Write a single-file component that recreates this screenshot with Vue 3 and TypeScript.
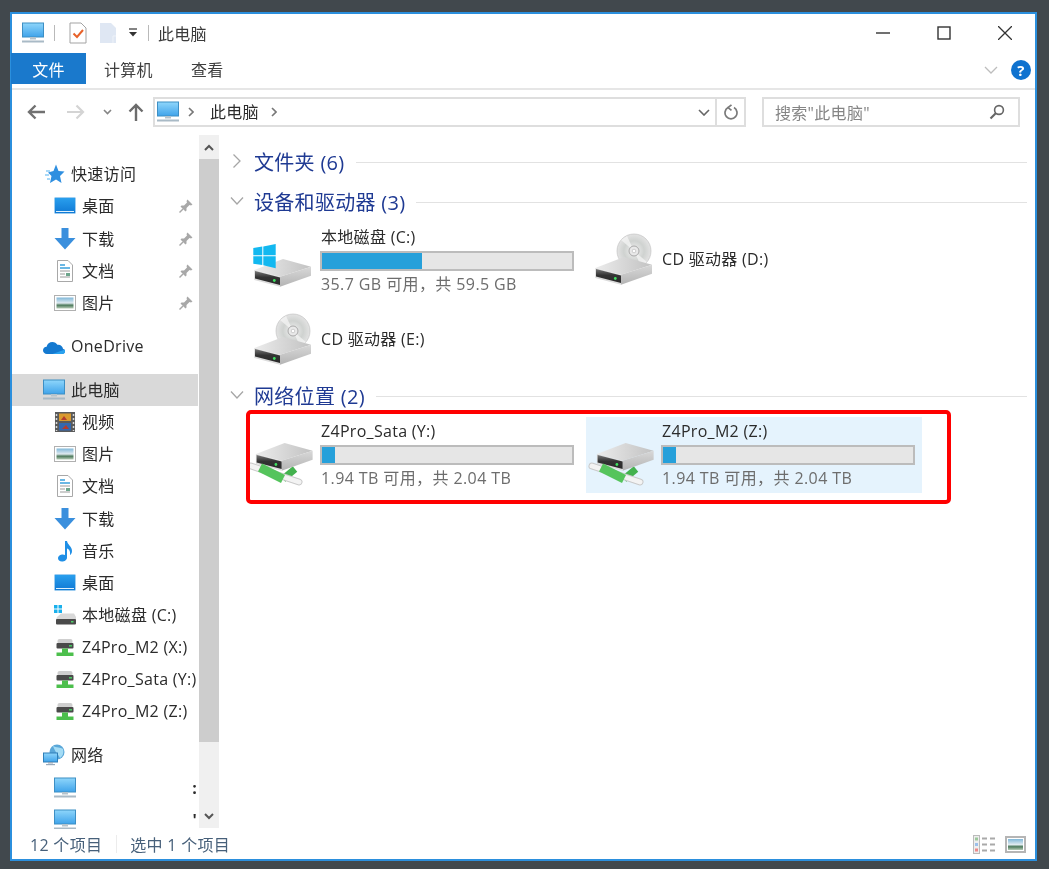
<script setup lang="ts">
// Explorer window, "This PC" view
interface NavRow {
  icon: string;
  label: string;
  child?: boolean;
  pin?: boolean;
  gap?: number;
  selected?: boolean;
  tail?: string;
}

interface Tile {
  name: string;
  icon: string;
  info?: string;
  percent?: number;
  selected?: boolean;
}

const navRows: NavRow[] = [
  { icon: 'star', label: '快速访问' },
  { icon: 'desktop', label: '桌面', child: true, pin: true },
  { icon: 'download', label: '下载', child: true, pin: true },
  { icon: 'doc', label: '文档', child: true, pin: true },
  { icon: 'pic', label: '图片', child: true, pin: true },
  { icon: 'cloud', label: 'OneDrive', gap: 12 },
  { icon: 'monitor', label: '此电脑', gap: 10, selected: true },
  { icon: 'video', label: '视频', child: true },
  { icon: 'pic', label: '图片', child: true },
  { icon: 'doc', label: '文档', child: true },
  { icon: 'download', label: '下载', child: true },
  { icon: 'music', label: '音乐', child: true },
  { icon: 'desktop', label: '桌面', child: true },
  { icon: 'cdrive', label: '本地磁盘 (C:)', child: true },
  { icon: 'netsmall', label: 'Z4Pro_M2 (X:)', child: true },
  { icon: 'netsmall', label: 'Z4Pro_Sata (Y:)', child: true },
  { icon: 'netsmall', label: 'Z4Pro_M2 (Z:)', child: true },
  { icon: 'network', label: '网络', gap: 11 },
  { icon: 'monitor', label: '', child: true, tail: ':' },
  { icon: 'monitor', label: '', child: true, tail: '\'' }
];

const deviceTiles: Tile[] = [
  { name: '本地磁盘 (C:)', icon: 'hddwin', info: '35.7 GB 可用，共 59.5 GB', percent: 40 },
  { name: 'CD 驱动器 (D:)', icon: 'hddcd' },
  { name: 'CD 驱动器 (E:)', icon: 'hddcd' }
];

const networkTiles: Tile[] = [
  { name: 'Z4Pro_Sata (Y:)', icon: 'hddnet', info: '1.94 TB 可用，共 2.04 TB', percent: 5 },
  { name: 'Z4Pro_M2 (Z:)', icon: 'hddnet', info: '1.94 TB 可用，共 2.04 TB', percent: 5, selected: true }
];
</script>

<template>
  <div class="desktop">
    <svg class="defs" width="0" height="0">
      <defs>
        <linearGradient id="screen" x1="0" y1="0" x2="0" y2="1">
          <stop offset="0" stop-color="#8fd6fb" />
          <stop offset="1" stop-color="#3fa3ea" />
        </linearGradient>
        <linearGradient id="deskfill" x1="0" y1="0" x2="0" y2="1">
          <stop offset="0" stop-color="#2aa0ee" />
          <stop offset="1" stop-color="#0f78d4" />
        </linearGradient>
        <linearGradient id="hddtop" x1="0" y1="0" x2="1" y2="0">
          <stop offset="0" stop-color="#ececec" />
          <stop offset="1" stop-color="#c2c2c2" />
        </linearGradient>
        <linearGradient id="hddside" x1="0" y1="0" x2="0" y2="1">
          <stop offset="0" stop-color="#d8d8d8" />
          <stop offset="1" stop-color="#b4b4b4" />
        </linearGradient>
        <linearGradient id="slot" x1="0" y1="0" x2="0" y2="1">
          <stop offset="0" stop-color="#777" />
          <stop offset=".45" stop-color="#333" />
          <stop offset="1" stop-color="#2a2a2a" />
        </linearGradient>
        <linearGradient id="landscape" x1="0" y1="0" x2="0" y2="1">
          <stop offset="0" stop-color="#7fb7d8" />
          <stop offset=".5" stop-color="#dfeaf0" />
          <stop offset=".7" stop-color="#4d7a5c" />
          <stop offset="1" stop-color="#b9cdb9" />
        </linearGradient>
        <radialGradient id="discfill" cx=".5" cy=".5" r=".5">
          <stop offset="0" stop-color="#f2f2f2" />
          <stop offset=".6" stop-color="#cfd2d0" />
          <stop offset="1" stop-color="#e3e3e3" />
        </radialGradient>

        <symbol id="monitor" viewBox="0 0 22 22">
          <rect x="0.5" y="1" width="21" height="14" fill="url(#screen)" stroke="#3d8fc4" />
          <rect x="8" y="15" width="6" height="2.5" fill="#b5c3cc" />
          <rect x="0" y="18.5" width="22" height="2" fill="#a9bac6" />
        </symbol>
        <symbol id="desktop" viewBox="0 0 22 22">
          <rect x="0.5" y="2.5" width="21" height="16" rx="1" fill="url(#deskfill)" stroke="#9ecdf0" />
          <rect x="2" y="16" width="18" height="1" fill="#dff1fd" />
        </symbol>
        <symbol id="download" viewBox="0 0 22 22">
          <path d="M7.5 0H14.5V10H21.5L11 21.5L0.5 10H7.5Z" fill="#3a8fdd" />
        </symbol>
        <symbol id="doc" viewBox="0 0 22 22">
          <path d="M3.5 0.5H14L18.5 5V21.5H3.5Z" fill="#fff" stroke="#a8a8a8" />
          <path d="M6 5H11M6 8H16" stroke="#3aa0dc" stroke-width="1.5" />
          <path d="M6 11H16M6 14H11M6 17H16" stroke="#9a9a9a" />
          <rect x="12" y="13" width="4" height="3" fill="#6da58c" />
        </symbol>
        <symbol id="pic" viewBox="0 0 22 22">
          <rect x="0.5" y="3.5" width="21" height="15" fill="#fff" stroke="#b0b0b0" />
          <rect x="2.5" y="5.5" width="17" height="11" fill="url(#landscape)" />
        </symbol>
        <symbol id="video" viewBox="0 0 22 22">
          <rect x="1" y="1" width="20" height="20" fill="#5a5a5a" />
          <rect x="5" y="2.5" width="12" height="7.5" fill="#d99a2e" />
          <rect x="5" y="12" width="12" height="7.5" fill="#3468b0" />
          <path d="M7 9L10 5L13 9ZM8 18L12 14L15 18Z" fill="#b33a2e" />
          <path d="M2.5 3V20M19.5 3V20" stroke="#d8d8d8" stroke-width="1.5" stroke-dasharray="2 2" />
        </symbol>
        <symbol id="music" viewBox="0 0 22 22">
          <path d="M11 1H13C13.5 5 18 6 18 11C18 13 17 14.5 16 15C16.5 11 15 9 13 8.5V17.5C13 20 10.5 21.5 8 21.5C5.5 21.5 4 20 4 18.2C4 16 6.5 14.5 8.8 14.5C9.6 14.5 10.4 14.7 11 15Z" fill="#1f8fe6" />
        </symbol>
        <symbol id="cdrive" viewBox="0 0 22 22">
          <path d="M0 1H3.5V4.5H0ZM4.5 1H8V4.5H4.5ZM0 5.5H3.5V9H0ZM4.5 5.5H8V9H4.5Z" fill="#19b0ec" />
          <path d="M3 13L7 9.5H20L22 13V16H2Z" fill="#d8d8d8" />
          <rect x="2" y="15" width="20" height="5.5" rx="1" fill="#4a4a4a" />
          <rect x="17" y="17" width="2.5" height="1.5" fill="#4fd06a" />
        </symbol>
        <symbol id="netsmall" viewBox="0 0 22 22">
          <rect x="3.5" y="2" width="15" height="5" rx="2" fill="#cfcfcf" />
          <rect x="2.5" y="6" width="17" height="5.5" rx="1" fill="#4a4a4a" />
          <rect x="15" y="8" width="3" height="1.6" fill="#48c860" />
          <rect x="8" y="11.5" width="6" height="4.5" fill="#4cbf4c" />
          <rect x="2.5" y="15.5" width="17" height="3.5" fill="#4cbf4c" />
        </symbol>
        <symbol id="star" viewBox="0 0 22 22">
          <path d="M13 1.5L15.5 8L21.5 8.5L17 13L18.5 20L13 16.5L7 20L8.5 13L5 9.5L10.5 8Z" fill="#2f8fe0" />
          <path d="M3 8H7M2 12H6M4 16H7" stroke="#8ccbf5" stroke-width="1.3" />
        </symbol>
        <symbol id="cloud" viewBox="0 0 22 22">
          <path d="M4 18C1.5 18 0 16.2 0 14.3C0 12.3 1.5 10.8 3.6 10.7C4.2 7.9 6.6 6 9.4 6C11.6 6 13.4 7.1 14.4 8.8C17.2 8.3 19.7 10.1 20 12.8C21.2 13.2 22 14.3 22 15.5C22 17 20.8 18 19.3 18Z" fill="#1479d0" />
          <path d="M9.5 18L22 13.4C22 14.3 22 14.8 22 15.5C22 17 20.8 18 19.3 18Z" fill="#2aa2ef" />
        </symbol>
        <symbol id="network" viewBox="0 0 22 22">
          <circle cx="14" cy="8" r="7.5" fill="#5aa7d8" />
          <path d="M10 2C13 4 18 3 20 5C21 9 20 12 17 14C15 10 12 8 10 2Z" fill="#a4dcf5" />
          <rect x="0.5" y="9" width="14" height="9" fill="url(#screen)" stroke="#2f7fb8" />
          <rect x="5" y="18" width="5" height="1.5" fill="#9ab" />
          <rect x="3" y="20" width="9" height="1.2" fill="#9ab" />
        </symbol>

        <g id="hdd-body">
          <path d="M1.3 31L30 20L58 27.7L27 37.7Z" fill="url(#hddtop)" />
          <path d="M27 37.7L58 27.7V36.7L27 47.7Z" fill="url(#hddside)" />
          <path d="M1.3 31L27 37.7V47.7L1.3 41Z" fill="#dcdcdc" />
          <path d="M2 32L27 38.6V46L2 39.5Z" fill="url(#slot)" />
          <circle cx="21.3" cy="41.5" r="1.4" fill="#3fe060" />
        </g>
        <symbol id="hddwin" viewBox="0 0 60 60" overflow="visible">
          <use href="#hdd-body" />
          <path d="M0.3 9L9.3 7.6V16.2H0.3ZM10.3 7.4L22.7 5V16.2H10.3ZM0.3 17.2H9.3V26L0.3 24.8ZM10.3 17.2H22.7V29.3L10.3 26.2Z" fill="#12b8f0" />
        </symbol>
        <symbol id="hddcd" viewBox="0 0 60 60" overflow="visible">
          <circle cx="40" cy="14" r="17" fill="url(#discfill)" stroke="#bcbcbc" stroke-width=".6" />
          <path d="M40 14L27 3L33 -1ZM40 14L53 25L47 29Z" fill="#f7f7f7" opacity=".7" />
          <circle cx="40" cy="14" r="5" fill="#e9e9e9" stroke="#a9a9a9" />
          <circle cx="40" cy="14" r="1.8" fill="#fff" stroke="#a9a9a9" stroke-width=".5" />
          <use href="#hdd-body" />
        </symbol>
        <symbol id="hddnet" viewBox="0 0 60 60" overflow="visible">
          <path d="M30 46L42 36" stroke="#43b24e" stroke-width="7" />
          <use href="#hdd-body" transform="translate(1.6 -10)" />
          <path d="M-2 33L46 49" stroke="#c9c9c9" stroke-width="7" stroke-linecap="round" />
          <path d="M-2 33L46 49" stroke="#f3f3f3" stroke-width="5" stroke-linecap="round" />
          <path d="M7 34.5L30 46" stroke="#55c45c" stroke-width="9" />
        </symbol>
      </defs>
    </svg>

    <div class="window">
      <!-- Title bar -->
      <header class="titlebar">
        <svg class="ico22"><use href="#monitor" /></svg>
        <i class="qsep first"></i>
        <svg class="qa" width="18" height="22" viewBox="0 0 18 22">
          <path d="M1 1H12L17 6V21H1Z" fill="#fff" stroke="#a3a3a3" />
          <path d="M4.5 11.5L8 15L14 8" fill="none" stroke="#e8622a" stroke-width="2" />
        </svg>
        <svg class="qa dim" width="18" height="22" viewBox="0 0 18 22">
          <path d="M1 1H12L17 6V21H1Z" fill="#dfe7f3" />
          <path d="M14 21V14H17" fill="none" stroke="#eef2f8" />
        </svg>
        <svg class="qa drop" width="10" height="10" viewBox="0 0 10 10">
          <path d="M1 1H9" stroke="#333" stroke-width="1.2" />
          <path d="M1 4H9L5 8.5Z" fill="#333" />
        </svg>
        <i class="qsep"></i>
        <span class="title">此电脑</span>
        <div class="caption">
          <svg width="14" height="14" viewBox="0 0 14 14"><path d="M0 7H14" stroke="#333" stroke-width="1.4" /></svg>
          <svg width="14" height="14" viewBox="0 0 14 14"><rect x="1" y="1" width="12" height="12" fill="none" stroke="#333" stroke-width="1.4" /></svg>
          <svg width="14" height="14" viewBox="0 0 14 14"><path d="M0 0L14 14M14 0L0 14" stroke="#333" stroke-width="1.3" /></svg>
        </div>
      </header>

      <!-- Ribbon tabs -->
      <nav class="ribbon">
        <span class="tab file">文件</span>
        <span class="tab">计算机</span>
        <span class="tab">查看</span>
        <svg class="collapse" width="14" height="8" viewBox="0 0 14 8"><path d="M1 1L7 7L13 1" fill="none" stroke="#bdbdbd" stroke-width="1.3" /></svg>
        <span class="help">?</span>
      </nav>

      <!-- Address row -->
      <div class="addressrow">
        <div class="navbtn wide">
          <svg width="18" height="16" viewBox="0 0 18 16"><path d="M18 8H2M8.5 1.5L2 8L8.5 14.5" fill="none" stroke="#717171" stroke-width="2.4" /></svg>
        </div>
        <div class="navbtn wide">
          <svg width="18" height="16" viewBox="0 0 18 16"><path d="M0 8H16M9.5 1.5L16 8L9.5 14.5" fill="none" stroke="#d4d4d4" stroke-width="2.2" /></svg>
        </div>
        <div class="navbtn thin">
          <svg width="9" height="6" viewBox="0 0 9 6"><path d="M1 1L4.5 4.5L8 1" fill="none" stroke="#858585" stroke-width="1.6" /></svg>
        </div>
        <div class="navbtn up">
          <svg width="16" height="18" viewBox="0 0 16 18"><path d="M8 18V2M1.5 8.5L8 2L14.5 8.5" fill="none" stroke="#6c6c6c" stroke-width="2.4" /></svg>
        </div>
        <div class="addressbox">
          <svg class="ico22"><use href="#monitor" /></svg>
          <svg class="crumb first" width="6" height="10" viewBox="0 0 6 10"><path d="M1 1L5 5L1 9" fill="none" stroke="#777" stroke-width="1.6" /></svg>
          <span class="crumbtext">此电脑</span>
          <svg class="crumb" width="6" height="10" viewBox="0 0 6 10"><path d="M1 1L5 5L1 9" fill="none" stroke="#777" stroke-width="1.6" /></svg>
          <svg class="addrdrop" width="12" height="7" viewBox="0 0 12 7"><path d="M1 1L6 6L11 1" fill="none" stroke="#666" stroke-width="1.6" /></svg>
          <div class="refresh">
            <svg width="14" height="16" viewBox="0 0 14 16"><path d="M4 3.6A6 6 0 1 0 10 3.6M7.5 0.8L4 3.6L7.5 6.4" fill="none" stroke="#7a7a7a" stroke-width="1.7" /></svg>
          </div>
        </div>
        <div class="searchbox">
          <span>搜索"此电脑"</span>
          <svg width="16" height="16" viewBox="0 0 16 16"><circle cx="10" cy="6" r="4.4" fill="none" stroke="#666" stroke-width="1.6" /><path d="M7 9L1.5 14.5" stroke="#666" stroke-width="2.2" /></svg>
        </div>
      </div>

      <div class="body">
        <!-- Navigation pane -->
        <aside class="sidebar">
          <div
            v-for="(row, i) in navRows"
            :key="i"
            class="navrow"
            :class="{ child: row.child, selected: row.selected, gap12: row.gap === 12, gap11: row.gap === 11, gap10: row.gap === 10 }"
          >
            <svg class="ico22"><use :href="'#' + row.icon" /></svg>
            <span class="navlabel">{{ row.label }}</span>
            <svg v-if="row.pin" class="pin" width="14" height="14" viewBox="0 0 14 14">
              <path d="M8.5 0.5L13.5 5.5L12 6.5L10.5 6L7.5 9L7.5 11.5L6.5 12.5L1.5 7.5L2.5 6.5L5 6.5L8 3.5L7.5 2Z" fill="#a8a8a8" />
              <path d="M4 10L0.5 13.5" stroke="#a8a8a8" stroke-width="1.4" />
            </svg>
            <span v-if="row.tail" class="tail">{{ row.tail }}</span>
          </div>
        </aside>

        <div class="scrollbar">
          <div class="sbtn">
            <svg width="10" height="7" viewBox="0 0 10 7"><path d="M1 6L5 2L9 6" fill="none" stroke="#555" stroke-width="2" /></svg>
          </div>
          <div class="thumb"></div>
          <div class="sbtn end">
            <svg width="10" height="7" viewBox="0 0 10 7"><path d="M1 1L5 5L9 1" fill="none" stroke="#555" stroke-width="2" /></svg>
          </div>
        </div>

        <!-- Content pane -->
        <main class="content">
          <div class="group">
            <svg class="chev" width="10" height="16" viewBox="0 0 10 16"><path d="M1.5 1.5L8 8L1.5 14.5" fill="none" stroke="#a6a6a6" stroke-width="1.3" /></svg>
            <span class="grouptitle">文件夹 (6)</span>
            <i class="groupline"></i>
          </div>
          <div class="group second">
            <svg class="chev" width="14" height="10" viewBox="0 0 14 10"><path d="M1 1.5L7 8L13 1.5" fill="none" stroke="#a6a6a6" stroke-width="1.3" /></svg>
            <span class="grouptitle">设备和驱动器 (3)</span>
            <i class="groupline"></i>
          </div>

          <div class="tiles devices">
            <div v-for="tile in deviceTiles" :key="tile.name" class="tile" :class="{ plain: !tile.info }">
              <svg class="tileicon"><use :href="'#' + tile.icon" /></svg>
              <div class="tiletext">
                <div class="tilename">{{ tile.name }}</div>
                <template v-if="tile.info">
                  <div class="bar"><div class="fill" :style="{ width: tile.percent + '%' }"></div></div>
                  <div class="tileinfo">{{ tile.info }}</div>
                </template>
              </div>
            </div>
          </div>

          <div class="group third">
            <svg class="chev" width="14" height="10" viewBox="0 0 14 10"><path d="M1 1.5L7 8L13 1.5" fill="none" stroke="#a6a6a6" stroke-width="1.3" /></svg>
            <span class="grouptitle">网络位置 (2)</span>
            <i class="groupline"></i>
          </div>

          <div class="tiles network">
            <div v-for="tile in networkTiles" :key="tile.name" class="tile" :class="{ picked: tile.selected }">
              <svg class="tileicon"><use :href="'#' + tile.icon" /></svg>
              <div class="tiletext">
                <div class="tilename">{{ tile.name }}</div>
                <div class="bar"><div class="fill" :style="{ width: tile.percent + '%' }"></div></div>
                <div class="tileinfo">{{ tile.info }}</div>
              </div>
            </div>
            <div class="redmark"></div>
          </div>
        </main>
      </div>

      <!-- Status bar -->
      <footer class="statusbar">
        <span>12 个项目</span>
        <i class="statussep"></i>
        <span>选中 1 个项目</span>
        <div class="views">
          <svg width="23" height="19" viewBox="0 0 23 19">
            <rect x="0.5" y="0.5" width="6" height="18" fill="#eee" stroke="#bbb" />
            <rect x="2" y="2.5" width="3" height="3" fill="#9cc89c" />
            <rect x="2" y="8" width="3" height="3" fill="#9cc0ea" />
            <rect x="2" y="13.5" width="3" height="3" fill="#e88" />
            <path d="M9 3.5H14M17 3.5H22M9 9.5H14M17 9.5H22M9 15.5H14M17 15.5H22" stroke="#a9a9a9" stroke-width="2" />
          </svg>
          <svg width="21" height="17" viewBox="0 0 21 17">
            <rect x="1" y="1" width="19" height="15" fill="#fff" stroke="#b5b5b5" stroke-width="2" />
            <rect x="3" y="3" width="15" height="11" fill="url(#landscape)" />
          </svg>
        </div>
      </footer>
    </div>
  </div>
</template>

<style scoped>
.defs {
  position: absolute;
}

.desktop {
  height: 869px;
  box-sizing: border-box;
  padding: 12px 12px 8px 10px;
  background: #41484d;
  font-family: "Open Sans", "Noto Sans CJK SC", sans-serif;
  overflow: hidden;
}

.window {
  height: 100%;
  box-sizing: border-box;
  display: flex;
  flex-direction: column;
  background: #fff;
  border: 2px solid #2b8fdd;
  filter: blur(0.45px);
  color: #2b2b2b;
  font-size: 16px;
  letter-spacing: 0.3px;
}

.ico22 {
  width: 22px;
  height: 22px;
  flex: none;
  overflow: visible;
}

/* title bar */
.titlebar {
  height: 38px;
  flex: none;
  display: flex;
  align-items: center;
  padding-left: 10px;
}

.qsep {
  width: 1px;
  height: 16px;
  background: #b9b9b9;
  margin-left: 10px;
}

.qsep.first {
  margin-right: 14px;
}

.qa {
  flex: none;
}

.qa.dim {
  margin-left: 12px;
}

.qa.drop {
  margin-left: 11px;
}

.title {
  margin-left: 9px;
  margin-top: -1px;
  color: #3a3a3a;
}

.caption {
  margin-left: auto;
  margin-right: 23px;
  display: flex;
  gap: 47px;
}

/* ribbon */
.ribbon {
  height: 38px;
  flex: none;
  box-sizing: border-box;
  display: flex;
  align-items: flex-start;
  padding-top: 1px;
  border-bottom: 2px solid #e6e6e6;
}

.tab {
  height: 31px;
  line-height: 34px;
  color: #3f3f3f;
  margin-left: 38px;
}

.tab:nth-child(2) {
  margin-left: 18px;
}

.tab.file {
  width: 75px;
  margin-left: -1px;
  background: #1a79cc;
  color: #fff;
  text-align: center;
}

.collapse {
  margin: 13px 0 0 auto;
}

.help {
  width: 20px;
  height: 20px;
  margin: 7px 4px 0 13px;
  border-radius: 50%;
  background: #0f72cf;
  color: #fff;
  font: 700 15px/20px "Open Sans", sans-serif;
  text-align: center;
}

/* address row */
.addressrow {
  height: 45px;
  flex: none;
  box-sizing: border-box;
  display: flex;
  align-items: flex-start;
  padding: 7px 0 0 4px;
}

.navbtn {
  height: 30px;
  display: flex;
  align-items: center;
  justify-content: center;
}

.navbtn.wide {
  width: 40px;
}

.navbtn.thin {
  width: 22px;
}

.navbtn.up {
  width: 35px;
}

.addressbox,
.searchbox {
  height: 30px;
  box-sizing: border-box;
  display: flex;
  align-items: center;
  border: 2px solid #dedede;
}

.addressbox {
  width: 593px;
  padding-left: 2px;
}

.crumb {
  margin-left: 12px;
}

.crumb.first {
  margin-left: 9px;
}

.crumbtext {
  margin-left: 16px;
  margin-top: -3px;
}

.addrdrop {
  margin-left: auto;
  margin-right: 5px;
}

.refresh {
  width: 27px;
  height: 100%;
  display: flex;
  align-items: center;
  justify-content: center;
  border-left: 2px solid #dedede;
}

.searchbox {
  width: 258px;
  margin-left: 16px;
  padding: 0 13px 0 11px;
  justify-content: space-between;
  color: #858585;
}

/* body */
.body {
  flex: 1;
  min-height: 0;
  display: flex;
}

.sidebar {
  width: 186px;
  flex: none;
  box-sizing: border-box;
  padding-top: 23px;
  overflow: hidden;
}

.navrow {
  height: 32.25px;
  display: flex;
  align-items: center;
  gap: 6px;
  padding: 0 5px 0 31px;
  white-space: nowrap;
}

.navlabel {
  margin-top: -2px;
}

.navrow.child {
  padding-left: 42px;
}

.navrow.gap12 {
  margin-top: 12px;
}

.navrow.gap11 {
  margin-top: 11px;
}

.navrow.gap10 {
  margin-top: 10px;
}

.navrow.selected {
  background: #d9d9d9;
}

.pin {
  margin-left: auto;
}

.tail {
  margin-left: auto;
  margin-right: -4px;
  font-weight: 700;
}

.scrollbar {
  width: 20px;
  flex: none;
  margin-left: 1px;
  display: flex;
  flex-direction: column;
  background: #f0f0f0;
  margin-bottom: 1px;
}

.sbtn {
  height: 24px;
  flex: none;
  display: flex;
  align-items: center;
  justify-content: center;
}

.sbtn.end {
  margin-top: auto;
}

.thumb {
  height: 583px;
  background: #cdcdcd;
}

/* content */
.content {
  flex: 1;
  min-width: 0;
  padding: 11px 8px 0 11px;
}

.group {
  height: 30px;
  display: flex;
  align-items: center;
}

.group.second {
  margin-top: 10px;
}

.group.third {
  margin-top: 1px;
}

.chev {
  width: 14px;
  flex: none;
  margin-right: 10px;
  margin-left: 0;
}

.grouptitle {
  font-size: 20px;
  color: #1f3a93;
  white-space: nowrap;
}

.groupline {
  flex: 1;
  height: 1px;
  margin: 2px 0 0 11px;
  background: #e2e2e2;
}

.tiles {
  display: grid;
  grid-template-columns: 336px 336px;
  grid-auto-rows: 76px;
  column-gap: 5px;
  row-gap: 4px;
  margin-left: 15px;
}

.tiles.devices {
  margin-top: 7px;
}

.tiles.network {
  position: relative;
  width: 677px;
  margin-top: 7px;
}

.redmark {
  position: absolute;
  left: 1px;
  top: -7px;
  width: 705px;
  height: 94px;
  box-sizing: border-box;
  border: 4px solid #ff0000;
  border-radius: 5px;
}

.tile {
  display: flex;
  align-items: flex-start;
  padding: 0 7px 0 8px;
}

.tile.picked {
  background: #e5f3fd;
}

.tileicon {
  width: 60px;
  height: 60px;
  flex: none;
  margin-top: 16px;
  overflow: visible;
}

.tile.plain .tileicon {
  margin-top: 14px;
}

.tiletext {
  margin-left: 8px;
  flex: 1;
  min-width: 0;
}

.tile.plain .tiletext {
  margin-top: 24px;
}

.tilename {
  height: 24px;
  line-height: 24px;
  margin-top: 2px;
}

.tile.plain .tilename {
  margin-top: 0;
}

.bar {
  height: 20px;
  box-sizing: border-box;
  margin-left: -1px;
  margin-top: 2px;
  border: 2px solid #bcbcbc;
  background: #e6e6e6;
}

.fill {
  height: 100%;
  background: #26a0da;
}

.tileinfo {
  margin-top: 1px;
  line-height: 24px;
  color: #6d6d6d;
  letter-spacing: 0.4px;
  white-space: nowrap;
}

/* status bar */
.statusbar {
  height: 30px;
  flex: none;
  display: flex;
  align-items: center;
  padding-left: 18px;
  color: #47607a;
}

.statussep {
  width: 1px;
  height: 18px;
  margin: 0 13px 0 14px;
  background: #ececec;
}

.views {
  margin-left: auto;
  margin-right: 9px;
  display: flex;
  align-items: center;
  gap: 9px;
}
</style>

<style>
html,
body {
  background: #41484d;
}
</style>
